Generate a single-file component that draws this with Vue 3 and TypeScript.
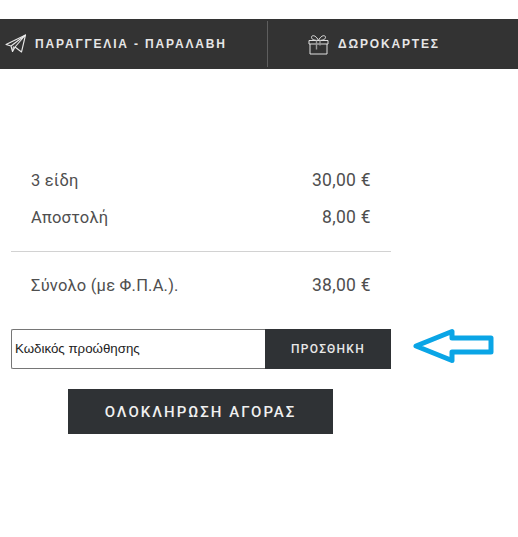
<script setup lang="ts">
interface Row { label: string; value: string }
const rows: Row[] = [
  { label: '3 είδη', value: '30,00 €' },
  { label: 'Αποστολή', value: '8,00 €' },
]
const total: Row = { label: 'Σύνολο (με Φ.Π.Α.).', value: '38,00 €' }
</script>

<template>
  <div class="page">
    <header class="bar">
      <div class="tab tab-left">
        <svg class="plane" width="22" height="20" viewBox="0 0 22 20" fill="none" stroke="#e8e8e8" stroke-width="1.1" stroke-linejoin="round">
          <path d="M1 10.5 20.5 1 16.5 18 10 13 7.5 17.5 6 12Z" />
          <path d="M6 12 20.5 1 10 13" />
          <path d="M7.5 17.5 8.5 12.5" />
        </svg>
        <span>ΠΑΡΑΓΓΕΛΙΑ - ΠΑΡΑΛΑΒΗ</span>
      </div>
      <div class="sep"></div>
      <div class="tab tab-right">
        <svg class="gift" width="21" height="21" viewBox="0 0 21 21" fill="none" stroke="#e0e0e0" stroke-width="1">
          <path d="M1 6.5h19v3.5H1z" />
          <path d="M2 10v10h17V10" />
          <path d="M10.5 6.5C8 1 3.5 .5 3.5 3.500c0 2 3.500 3 7 3 3.500 0 7-1 7-3 0-3-4.500-2.500-7 3Z" />
          <path d="M8.500 6.500v9M12 6.500v5" stroke="#999" stroke-width="1.4" />
        </svg>
        <span>ΔΩΡΟΚΑΡΤΕΣ</span>
      </div>
    </header>

    <main class="content">
      <section class="summary">
        <div v-for="row in rows" :key="row.label" class="row">
          <span>{{ row.label }}</span>
          <span class="amount">{{ row.value }}</span>
        </div>
        <hr class="rule" />
        <div class="row">
          <span>{{ total.label }}</span>
          <span class="amount">{{ total.value }}</span>
        </div>
      </section>

      <form class="promo" @submit.prevent>
        <input class="promo-input" type="text" placeholder="Κωδικός προώθησης" />
        <button class="promo-btn" type="button">ΠΡΟΣΘΗΚΗ</button>
        <svg class="arrow" width="84" height="46" viewBox="0 0 84 46" fill="none">
          <path d="M5 23 L41 8.500 V15 H80 V29 H41 V37.500 Z" stroke="#0aa5e6" stroke-width="5" stroke-linejoin="round" />
        </svg>
      </form>

      <button class="checkout" type="button">ΟΛΟΚΛΗΡΩΣΗ ΑΓΟΡΑΣ</button>
    </main>
  </div>
</template>

<style>
html, body { margin: 0; background: #fff; }
</style>

<style scoped>
.page {
  width: 518px;
  height: 537px;
  padding-top: 19px;
  box-sizing: border-box;
  font-family: Roboto, "Liberation Sans", sans-serif;
  overflow: hidden;
}
.bar {
  height: 50px;
  background: #333;
  display: flex;
  align-items: center;
  color: #e6e6e6;
  font-family: "Liberation Sans", Arial, sans-serif;
  font-size: 12px;
  font-weight: 700;
  letter-spacing: 1.83px;
}
.tab { display: flex; align-items: center; }
.tab-left { width: 267px; padding-left: 5px; box-sizing: border-box; gap: 8px; }
.tab-right { padding-left: 40px; gap: 9px; }
.sep { width: 1px; height: 46px; background: #5e5e5e; }
.content { padding: 93px 0 0 11px; width: 380px; }
.summary { width: 380px; }
.row {
  display: flex;
  justify-content: space-between;
  padding: 0 20px;
  height: 37px;
  line-height: 37px;
  font-size: 16.5px;
  color: #4f4f4f;
  letter-spacing: 0.2px;
}
.amount { font-size: 17.5px; letter-spacing: 0.3px; }
.rule { margin: 15px 0; border: 0; border-top: 1px solid #d2d2d2; }
.promo { position: relative; display: flex; height: 40px; margin-top: 25px; }
.promo-input {
  width: 254px;
  height: 40px;
  box-sizing: border-box;
  border: 1px solid #767676;
  border-right: 0;
  border-radius: 2px 0 0 2px;
  padding: 0 3px 2px;
  font-family: "Liberation Sans", Arial, sans-serif;
  font-size: 13.3px;
  background: #fff;
  outline: none;
}
.promo-input::placeholder { color: #222; opacity: 1; }
.promo-btn {
  width: 126px;
  height: 40px;
  border: 0;
  padding: 0;
  background: #2f3235;
  color: #e8e8e8;
  font-family: Roboto, sans-serif;
  font-size: 12px;
  font-weight: 500;
  letter-spacing: 1.25px;
}
.arrow { position: absolute; left: 400px; top: -6px; }
.checkout {
  display: block;
  width: 265px;
  height: 45px;
  margin: 20px 0 0 57px;
  border: 0;
  padding: 0;
  background: #2f3235;
  color: #f0f0f0;
  font-family: Roboto, sans-serif;
  font-size: 15px;
  font-weight: 500;
  letter-spacing: 2px;
}
</style>
